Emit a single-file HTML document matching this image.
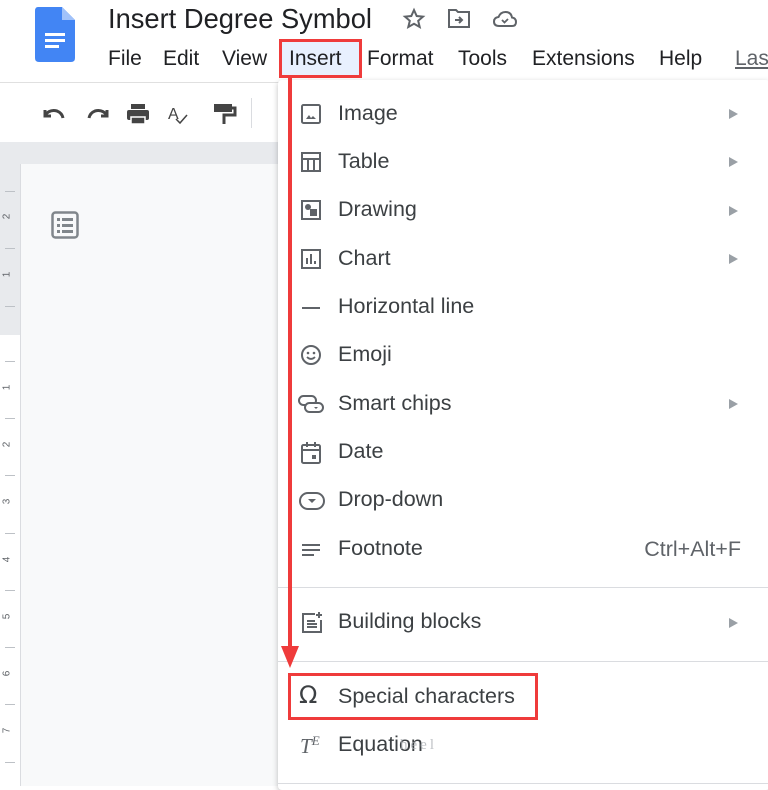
<!DOCTYPE html>
<html><head><meta charset="utf-8"><style>
*{margin:0;padding:0;box-sizing:border-box}
body{width:768px;height:786px;overflow:hidden;background:#fff;font-family:"Liberation Sans",Arial,sans-serif;position:relative;color:#3c4043}
.a{position:absolute}
.menu-t{font-size:21px;color:#202124}
.mi{position:absolute;left:338px;font-size:21.5px;color:#3c4043;margin-top:-1px}
.ic{position:absolute;left:300px}
.arr{position:absolute;left:729px;width:0;height:0;border-top:5px solid transparent;border-bottom:5px solid transparent;border-left:9px solid #9aa0a6}
.rn{position:absolute;left:4px;font-size:10px;color:#5f6368;transform:rotate(-90deg)}
.tk{position:absolute;height:1px;background:#bdc1c6}
</style></head><body>
<svg class="a" style="left:35px;top:7px" width="40" height="55" viewBox="0 0 40 55"><path d="M3 0H27L40 13V51Q40 55 36 55H4Q0 55 0 51V4Q0 0 3 0Z" fill="#4285f4"/><path d="M27 0V13H40Z" fill="#a1c2fa"/><rect x="10" y="26" width="20" height="3" fill="#fff"/><rect x="10" y="32" width="20" height="3" fill="#fff"/><rect x="10" y="38" width="14" height="3" fill="#fff"/></svg>
<div class="a" style="left:108px;top:3px;font-size:27.3px;color:#202124">Insert Degree Symbol</div>
<svg class="a" style="left:402px;top:7px" width="24" height="24" viewBox="0 0 24 24"><path d="M12 3l2.7 6 6.3.6-4.8 4.2 1.5 6.2L12 16.8 6.3 20l1.5-6.2L3 9.6l6.3-.6z" fill="none" stroke="#5f6368" stroke-width="2"/></svg>
<svg class="a" style="left:447px;top:8px" width="24" height="22" viewBox="0 0 24 22"><path d="M2 2h7l2 2h11v15H2z" fill="none" stroke="#5f6368" stroke-width="2"/><path d="M8 12h7M12 9l3 3-3 3" fill="none" stroke="#5f6368" stroke-width="2"/></svg>
<svg class="a" style="left:492px;top:9px" width="26" height="20" viewBox="0 0 26 20"><path d="M7 17Q2 17 2 12.5 2 8.5 6.5 8 8.5 3 13.5 3 19 3 20 8.5 24 9 24 13 24 17 20 17Z" fill="none" stroke="#5f6368" stroke-width="2"/><path d="M10 11l2.5 2.5L16 10" fill="none" stroke="#5f6368" stroke-width="1.8"/></svg>
<div class="a menu-t" style="left:108px;top:47px">File</div>
<div class="a menu-t" style="left:163px;top:47px">Edit</div>
<div class="a menu-t" style="left:222px;top:47px">View</div>
<div class="a" style="left:280px;top:40px;width:81px;height:37px;background:#e8f0fe"></div>
<div class="a menu-t" style="left:289px;top:47px">Insert</div>
<div class="a menu-t" style="left:367px;top:47px">Format</div>
<div class="a menu-t" style="left:458px;top:47px">Tools</div>
<div class="a menu-t" style="left:532px;top:47px">Extensions</div>
<div class="a menu-t" style="left:659px;top:47px">Help</div>
<div class="a menu-t" style="left:735px;top:47px;color:#5f6368;text-decoration:underline">Las</div>
<div class="a" style="left:0;top:82px;width:768px;height:1px;background:#e0e0e0"></div>
<svg class="a" style="left:40px;top:102px" width="200" height="24" viewBox="0 0 200 24">
<path d="M5 8v6h6M5 13Q10 7 17 9q5 2 6 7" fill="none" stroke="#444" stroke-width="3"/>
<path d="M67 8v6h-6M67 13Q62 7 55 9q-5 2-6 7" fill="none" stroke="#444" stroke-width="3"/>
<rect x="87" y="8" width="22" height="10" rx="2" fill="#444"/><rect x="91" y="2" width="14" height="5" fill="#444"/><rect x="91" y="15" width="14" height="7" fill="#444" stroke="#fff" stroke-width="1.5"/>
<text x="128" y="17" font-size="16" font-family="Liberation Sans" fill="#444">A</text><path d="M136 17l4 4 7-8" fill="none" stroke="#444" stroke-width="1.5"/>
<rect x="174" y="2" width="18" height="8" fill="#444"/><path d="M192 6h3v7h-11v9" fill="none" stroke="#444" stroke-width="3"/>
</svg>
<div class="a" style="left:251px;top:98px;width:1px;height:30px;background:#dadce0"></div>
<div class="a" style="left:0;top:142px;width:768px;height:22px;background:#e8eaed"></div>
<div class="a" style="left:0;top:164px;width:20px;height:171px;background:#e8eaed"></div>
<div class="a" style="left:20px;top:164px;width:1px;height:622px;background:#dadce0"></div>
<div class="a" style="left:21px;top:164px;width:747px;height:622px;background:#f8f9fa"></div>
<svg class="a" style="left:51px;top:211px" width="28" height="28" viewBox="0 0 28 28"><rect x="1.5" y="1.5" width="25" height="25" rx="3" fill="none" stroke="#80868b" stroke-width="2.5"/><rect x="6" y="7" width="3" height="3" fill="#80868b"/><rect x="11" y="7" width="11" height="3" fill="#80868b"/><rect x="6" y="13" width="3" height="3" fill="#80868b"/><rect x="11" y="13" width="11" height="3" fill="#80868b"/><rect x="6" y="19" width="3" height="3" fill="#80868b"/><rect x="11" y="19" width="11" height="3" fill="#80868b"/></svg>
<div class="rn" style="top:211px">2</div><div class="rn" style="top:269px">1</div>
<div class="rn" style="top:382px">1</div><div class="rn" style="top:439px">2</div><div class="rn" style="top:496px">3</div><div class="rn" style="top:554px">4</div><div class="rn" style="top:611px">5</div><div class="rn" style="top:668px">6</div><div class="rn" style="top:725px">7</div>
<div class="tk" style="left:5px;top:191px;width:10px"></div><div class="tk" style="left:5px;top:248px;width:10px"></div><div class="tk" style="left:5px;top:306px;width:10px"></div>
<div class="tk" style="left:5px;top:361px;width:10px"></div><div class="tk" style="left:5px;top:418px;width:10px"></div><div class="tk" style="left:5px;top:475px;width:10px"></div><div class="tk" style="left:5px;top:533px;width:10px"></div><div class="tk" style="left:5px;top:590px;width:10px"></div><div class="tk" style="left:5px;top:647px;width:10px"></div><div class="tk" style="left:5px;top:704px;width:10px"></div><div class="tk" style="left:5px;top:762px;width:10px"></div>
<div class="a" style="left:278px;top:80px;width:492px;height:710px;background:#fff;border-radius:4px;box-shadow:0 2px 6px rgba(0,0,0,.25)"></div>
<svg class="ic" style="top:103px" width="22" height="22" viewBox="0 0 22 22"><rect x="2" y="2" width="18" height="18" rx="1.5" fill="none" stroke="#5f6368" stroke-width="2"/><path d="M6 16l3-4 2 3 2-2 3 3z" fill="#5f6368"/></svg>
<div class="mi" style="top:102px">Image</div><div class="arr" style="top:109px"></div>
<svg class="ic" style="top:151px" width="22" height="22" viewBox="0 0 22 22"><rect x="2" y="2" width="18" height="18" fill="none" stroke="#5f6368" stroke-width="2"/><path d="M2 8h18M8 8v12M14 8v12" stroke="#5f6368" stroke-width="2"/></svg>
<div class="mi" style="top:150px">Table</div><div class="arr" style="top:157px"></div>
<svg class="ic" style="top:199px" width="22" height="22" viewBox="0 0 22 22"><rect x="2" y="2" width="18" height="18" fill="none" stroke="#5f6368" stroke-width="2"/><circle cx="8" cy="8" r="3" fill="#5f6368"/><rect x="10" y="10" width="7" height="7" fill="#5f6368"/></svg>
<div class="mi" style="top:198px">Drawing</div><div class="arr" style="top:206px"></div>
<svg class="ic" style="top:248px" width="22" height="22" viewBox="0 0 22 22"><rect x="2" y="2" width="18" height="18" fill="none" stroke="#5f6368" stroke-width="2"/><path d="M7 16V10M11 16V6M15 16v-3" stroke="#5f6368" stroke-width="2"/></svg>
<div class="mi" style="top:247px">Chart</div><div class="arr" style="top:254px"></div>
<div class="a" style="left:302px;top:307px;width:18px;height:2px;background:#5f6368"></div>
<div class="mi" style="top:295px">Horizontal line</div>
<svg class="ic" style="top:344px" width="22" height="22" viewBox="0 0 22 22"><circle cx="11" cy="11" r="9" fill="none" stroke="#5f6368" stroke-width="2"/><circle cx="8" cy="9" r="1.3" fill="#5f6368"/><circle cx="14" cy="9" r="1.3" fill="#5f6368"/><path d="M7 13q4 4 8 0" fill="none" stroke="#5f6368" stroke-width="1.8"/></svg>
<div class="mi" style="top:343px">Emoji</div>
<svg class="ic" style="left:297px;top:393px" width="28" height="22" viewBox="0 0 28 22"><rect x="2" y="3" width="17" height="9" rx="4.5" fill="none" stroke="#5f6368" stroke-width="2"/><rect x="8" y="10" width="18" height="9" rx="4.5" fill="#fff" stroke="#5f6368" stroke-width="2"/><path d="M17 14l2 2 2-2" fill="#5f6368"/></svg>
<div class="mi" style="top:392px">Smart chips</div><div class="arr" style="top:399px"></div>
<svg class="ic" style="top:441px" width="22" height="24" viewBox="0 0 22 24"><rect x="2" y="4" width="18" height="18" rx="1.5" fill="none" stroke="#5f6368" stroke-width="2"/><path d="M2 9h18M7 1v5M15 1v5" stroke="#5f6368" stroke-width="2"/><rect x="12" y="14" width="4" height="4" fill="#5f6368"/></svg>
<div class="mi" style="top:440px">Date</div>
<svg class="ic" style="left:298px;top:490px" width="28" height="22" viewBox="0 0 28 22"><rect x="2" y="3" width="24" height="16" rx="8" fill="none" stroke="#5f6368" stroke-width="2"/><path d="M10 9h8l-4 4z" fill="#5f6368"/></svg>
<div class="mi" style="top:488px">Drop-down</div>
<svg class="ic" style="top:539px" width="22" height="22" viewBox="0 0 22 22"><path d="M2 6h18M2 11h18M2 16h12" stroke="#5f6368" stroke-width="2"/></svg>
<div class="mi" style="top:537px">Footnote</div>
<div class="a" style="right:27px;top:537px;font-size:21.5px;color:#5f6368">Ctrl+Alt+F</div>
<div class="a" style="left:278px;top:587px;width:490px;height:1px;background:#dadce0"></div>
<svg class="ic" style="top:611px" width="24" height="24" viewBox="0 0 24 24"><path d="M15 3H3v18h18V9" fill="none" stroke="#5f6368" stroke-width="2"/><path d="M7 10h8M7 13h10M7 16h10" stroke="#5f6368" stroke-width="2"/><path d="M19 1v6M16 4h6" stroke="#5f6368" stroke-width="2"/></svg>
<div class="mi" style="top:610px">Building blocks</div><div class="arr" style="top:618px"></div>
<div class="a" style="left:278px;top:661px;width:490px;height:1px;background:#dadce0"></div>
<div class="a" style="left:299px;top:681px;font-size:24px;color:#3c4043;font-family:'DejaVu Sans',sans-serif">Ω</div>
<div class="mi" style="top:685px">Special characters</div>
<div class="a" style="left:300px;top:733px;font-size:21px;color:#5f6368;font-style:italic;font-family:'Liberation Serif',serif">T<span style="font-size:13px;vertical-align:super">E</span></div>
<div class="mi" style="top:733px">Equation</div>
<div class="a" style="left:400px;top:737px;font-size:15px;color:#b0b4b8;letter-spacing:3px;font-family:'Liberation Serif',serif;opacity:.8">heel</div>
<div class="a" style="left:278px;top:783px;width:490px;height:1px;background:#dadce0"></div>
<div class="a" style="left:279px;top:39px;width:83px;height:39px;border:3px solid #ef3b3b"></div>
<div class="a" style="left:288px;top:78px;width:4px;height:572px;background:#ef3b3b"></div>
<div class="a" style="left:281px;top:646px;width:0;height:0;border-left:9px solid transparent;border-right:9px solid transparent;border-top:22px solid #ef3b3b"></div>
<div class="a" style="left:288px;top:673px;width:250px;height:47px;border:3px solid #ef3b3b"></div>
</body></html>
